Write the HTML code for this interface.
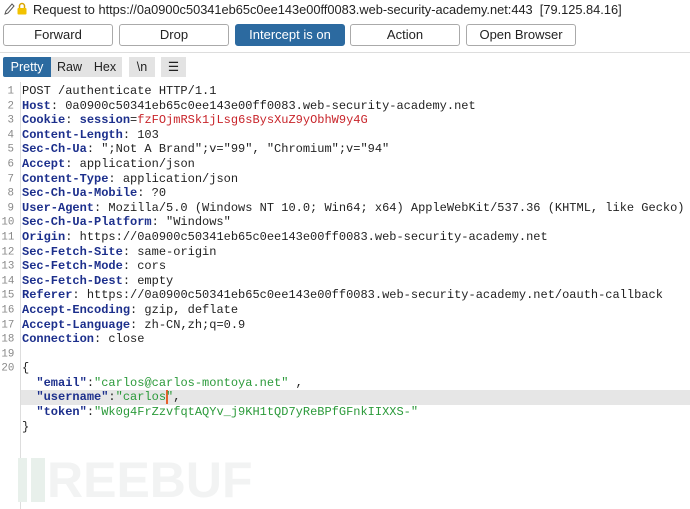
<!DOCTYPE html>
<html><head><meta charset="utf-8"><style>
*{margin:0;padding:0;box-sizing:border-box}
body{width:690px;height:509px;background:#fff;font-family:"Liberation Sans",sans-serif;position:relative;overflow:hidden;color:#222}
.top{position:absolute;left:33px;top:2px;font-size:12.8px;color:#222;white-space:nowrap}
.btn{position:absolute;top:24px;height:22px;width:110px;border:1px solid #aaa;border-radius:3px;background:#fff;font-size:13px;text-align:center;line-height:20px;color:#222}
.btn.on{background:#2c6aa0;border-color:#2c6aa0;color:#fff}
.hr{position:absolute;left:0;right:0;top:52px;height:1px;background:#ddd}
.tab{position:absolute;top:57px;height:20px;font-size:12.5px;line-height:20px;text-align:center;background:#e3e3e3;color:#222}
.gut{position:absolute;left:20px;top:82px;bottom:0;width:1px;background:#ddd}
.code{position:absolute;left:0;top:84px;font-family:"Liberation Mono",monospace;font-size:12px;line-height:14.6px;white-space:pre}
.ln{display:inline-block;width:14px;text-align:right;color:#888;margin-right:8px;font-size:12px;line-height:14.6px;vertical-align:top;transform:scale(0.9);transform-origin:right center}
.k{color:#1c2f8c;font-weight:bold}
.r{color:#c8242a}
.g{color:#2b9a3a}
.hl{position:absolute;left:21px;right:0;top:390px;height:14.6px;background:#e6e6e6}
.wm{position:absolute;left:18px;top:458px;font-family:"Liberation Sans",sans-serif;font-weight:bold;font-size:50px;line-height:44px;color:#f2f3f3;letter-spacing:0px}
</style></head><body>
<svg style="position:absolute;left:3px;top:2px" width="12" height="14" viewBox="0 0 12 14"><path d="M2 12 L3 9 L9 2 L11 4 L5 11 Z M2 12 L5 11" fill="none" stroke="#555" stroke-width="1"/></svg>
<svg style="position:absolute;left:17px;top:2px" width="10" height="13" viewBox="0 0 10 13"><path d="M2.5 6 V4 a2.5 2.5 0 0 1 5 0 V6" fill="none" stroke="#d9a400" stroke-width="1.5"/><rect x="0.5" y="6" width="9" height="6.5" rx="1" fill="#f2c200"/></svg>
<div class="top">Request to https://0a0900c50341eb65c0ee143e00ff0083.web-security-academy.net:443&nbsp;&nbsp;[79.125.84.16]</div>
<div class="btn" style="left:3px">Forward</div>
<div class="btn" style="left:119px">Drop</div>
<div class="btn on" style="left:235px">Intercept is on</div>
<div class="btn" style="left:350px">Action</div>
<div class="btn" style="left:466px">Open Browser</div>
<div class="hr"></div>
<div class="tab" style="left:3px;width:48px;background:#2c6aa0;color:#fff;border-radius:2px 0 0 2px">Pretty</div>
<div class="tab" style="left:51px;width:37px">Raw</div>
<div class="tab" style="left:88px;width:34px">Hex</div>
<div class="tab" style="left:129px;width:26px">\n</div>
<div class="tab" style="left:161px;width:25px">☰</div>
<div class="gut"></div>
<div class="hl"></div>
<div class="wm"><span style="display:inline-block;width:9px;height:44px;background:#e8f0eb;margin-right:4px;vertical-align:top"></span><span style="display:inline-block;width:14px;height:44px;background:#e8f0eb;margin-right:2px;vertical-align:top"></span>REEBUF</div>
<div class="code"><span class="ln">1</span>POST /authenticate HTTP/1.1
<span class="ln">2</span><span class="k">Host</span>: 0a0900c50341eb65c0ee143e00ff0083.web-security-academy.net
<span class="ln">3</span><span class="k">Cookie</span>: <span class="k">session</span>=<span class="r">fzFOjmRSk1jLsg6sBysXuZ9yObhW9y4G</span>
<span class="ln">4</span><span class="k">Content-Length</span>: 103
<span class="ln">5</span><span class="k">Sec-Ch-Ua</span>: ";Not A Brand";v="99", "Chromium";v="94"
<span class="ln">6</span><span class="k">Accept</span>: application/json
<span class="ln">7</span><span class="k">Content-Type</span>: application/json
<span class="ln">8</span><span class="k">Sec-Ch-Ua-Mobile</span>: ?0
<span class="ln">9</span><span class="k">User-Agent</span>: Mozilla/5.0 (Windows NT 10.0; Win64; x64) AppleWebKit/537.36 (KHTML, like Gecko)
<span class="ln">10</span><span class="k">Sec-Ch-Ua-Platform</span>: "Windows"
<span class="ln">11</span><span class="k">Origin</span>: https://0a0900c50341eb65c0ee143e00ff0083.web-security-academy.net
<span class="ln">12</span><span class="k">Sec-Fetch-Site</span>: same-origin
<span class="ln">13</span><span class="k">Sec-Fetch-Mode</span>: cors
<span class="ln">14</span><span class="k">Sec-Fetch-Dest</span>: empty
<span class="ln">15</span><span class="k">Referer</span>: https://0a0900c50341eb65c0ee143e00ff0083.web-security-academy.net/oauth-callback
<span class="ln">16</span><span class="k">Accept-Encoding</span>: gzip, deflate
<span class="ln">17</span><span class="k">Accept-Language</span>: zh-CN,zh;q=0.9
<span class="ln">18</span><span class="k">Connection</span>: close
<span class="ln">19</span>
<span class="ln">20</span>{
<span class="ln"> </span>  <span class="k">"email"</span>:<span class="g">"carlos@carlos-montoya.net"</span> ,
<span class="ln"> </span>  <span class="k">"username"</span>:<span class="g">"carlos<span style="border-left:2px solid #e8602c;margin-right:-2px"></span>"</span>,
<span class="ln"> </span>  <span class="k">"token"</span>:<span class="g">"Wk0g4FrZzvfqtAQYv_j9KH1tQD7yReBPfGFnkIIXXS-"</span>
<span class="ln"> </span>}</div>
</body></html>
